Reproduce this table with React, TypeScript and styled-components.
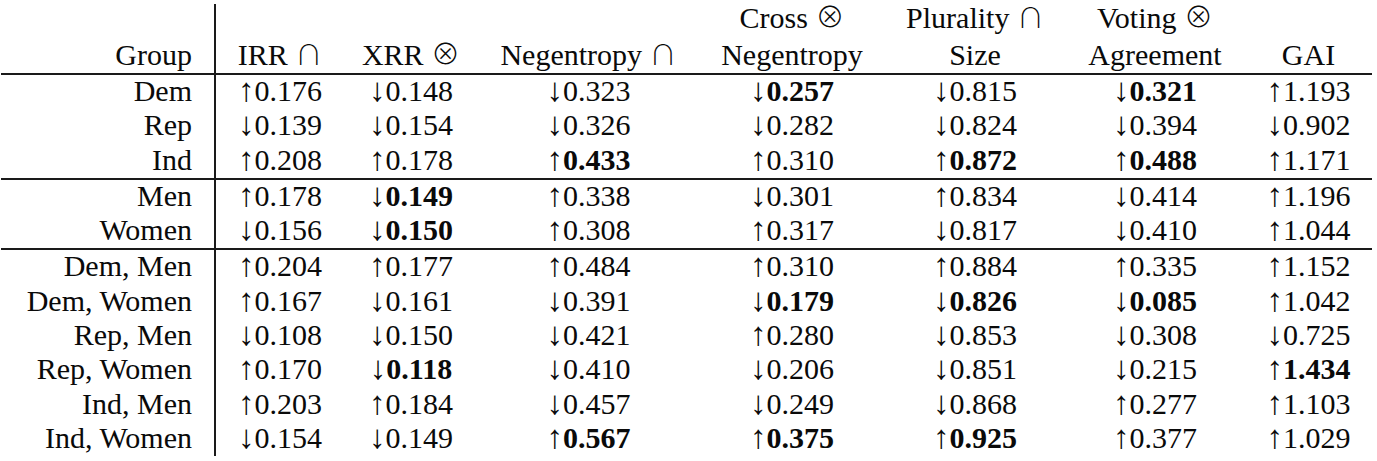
import React from "react";
import styled, { createGlobalStyle } from "styled-components";

const GlobalStyle = createGlobalStyle`
  body {
    margin: 0;
    background: #fff;
  }
`;

const Table = styled.table`
  border-collapse: collapse;
  table-layout: fixed;
  margin: 4px 0 0 1px;
  font-family: "Liberation Serif", "Times New Roman", serif;
  font-size: 30px;
  color: #0a0a0a;
`;

const Col = styled.col<{ $w: number }>`
  width: ${p => p.$w}px;
`;

const Section = styled.tbody`
  border-top: 2px solid #1a1a1a;
`;

const Cell = styled.td<{ $group?: boolean }>`
  height: 31.3px;
  padding: 0 0 3px;
  line-height: 31.3px;
  white-space: nowrap;
  vertical-align: middle;
  text-align: ${p => (p.$group ? "right" : "center")};
  padding-right: ${p => (p.$group ? "22px" : "0")};
  border-right: ${p => (p.$group ? "2px solid #1a1a1a" : "none")};
  font-weight: normal;
`;

// first header line sits high in its row, second one low
const HeadCell = styled(Cell).attrs({ as: "th" })<{ $top?: boolean }>`
  height: ${p => (p.$top ? 27 : 36)}px;
  line-height: ${p => (p.$top ? 26 : 36)}px;
  padding-bottom: ${p => (p.$top ? 6 : 0)}px;
`;

const Sym = styled.span<{ $size: number }>`
  font-family: "Noto Sans CJK JP", "DejaVu Serif", serif;
  font-weight: 300;
  font-size: ${p => p.$size}px;
  line-height: 20px;
`;

const Arrow = styled.span`
  font-family: "Liberation Serif", "DejaVu Serif", serif;
  font-size: 33px;
  line-height: 20px;
`;

const Num = styled.span<{ $bold?: boolean }>`
  font-family: "Liberation Serif", serif;
  font-weight: ${p => (p.$bold ? "bold" : "normal")};
`;

const Cap = () => <Sym $size={27}>∩</Sym>;
const Otimes = () => <Sym $size={29}>⊗</Sym>;

const widths = [214, 129, 134, 221, 186, 180, 180, 127];

type Val = string; // "u0.176" / "d0.148", trailing "*" = bold

const sections: [string, Val[]][][] = [
  [
    ["Dem", ["u0.176", "d0.148", "d0.323", "d0.257*", "d0.815", "d0.321*", "u1.193"]],
    ["Rep", ["d0.139", "d0.154", "d0.326", "d0.282", "d0.824", "d0.394", "d0.902"]],
    ["Ind", ["u0.208", "u0.178", "u0.433*", "u0.310", "u0.872*", "u0.488*", "u1.171"]],
  ],
  [
    ["Men", ["u0.178", "d0.149*", "u0.338", "d0.301", "u0.834", "d0.414", "u1.196"]],
    ["Women", ["d0.156", "d0.150*", "u0.308", "u0.317", "d0.817", "d0.410", "u1.044"]],
  ],
  [
    ["Dem, Men", ["u0.204", "u0.177", "u0.484", "u0.310", "u0.884", "u0.335", "u1.152"]],
    ["Dem, Women", ["u0.167", "d0.161", "d0.391", "d0.179*", "d0.826*", "d0.085*", "u1.042"]],
    ["Rep, Men", ["d0.108", "d0.150", "d0.421", "u0.280", "d0.853", "d0.308", "d0.725"]],
    ["Rep, Women", ["u0.170", "d0.118*", "d0.410", "d0.206", "d0.851", "d0.215", "u1.434*"]],
    ["Ind, Men", ["u0.203", "u0.184", "d0.457", "d0.249", "d0.868", "u0.277", "u1.103"]],
    ["Ind, Women", ["d0.154", "d0.149", "u0.567*", "u0.375*", "u0.925*", "u0.377", "u1.029"]],
  ],
];

const Value = ({ v }: { v: Val }) => {
  const bold = v.endsWith("*");
  const num = v.slice(1).replace("*", "");
  return (
    <>
      <Arrow>{v[0] === "u" ? "↑" : "↓"}</Arrow>
      <Num $bold={bold}>{num}</Num>
    </>
  );
};

export default function App() {
  return (
    <>
      <GlobalStyle />
      <Table>
        <colgroup>
          {widths.map((w, i) => (
            <Col key={i} $w={w} />
          ))}
        </colgroup>
        <thead>
          <tr>
            <HeadCell $group $top />
            <HeadCell $top />
            <HeadCell $top />
            <HeadCell $top />
            <HeadCell $top>Cross <Otimes /></HeadCell>
            <HeadCell $top>Plurality <Cap /></HeadCell>
            <HeadCell $top>Voting <Otimes /></HeadCell>
            <HeadCell $top />
          </tr>
          <tr>
            <HeadCell $group>Group</HeadCell>
            <HeadCell>IRR <Cap /></HeadCell>
            <HeadCell>XRR <Otimes /></HeadCell>
            <HeadCell>Negentropy <Cap /></HeadCell>
            <HeadCell>Negentropy</HeadCell>
            <HeadCell>Size</HeadCell>
            <HeadCell>Agreement</HeadCell>
            <HeadCell>GAI</HeadCell>
          </tr>
        </thead>
        {sections.map((rows, s) => (
          <Section key={s}>
            {rows.map(([label, vals]) => (
              <tr key={label}>
                <Cell $group>{label}</Cell>
                {vals.map((v, i) => (
                  <Cell key={i}>
                    <Value v={v} />
                  </Cell>
                ))}
              </tr>
            ))}
          </Section>
        ))}
      </Table>
    </>
  );
}
